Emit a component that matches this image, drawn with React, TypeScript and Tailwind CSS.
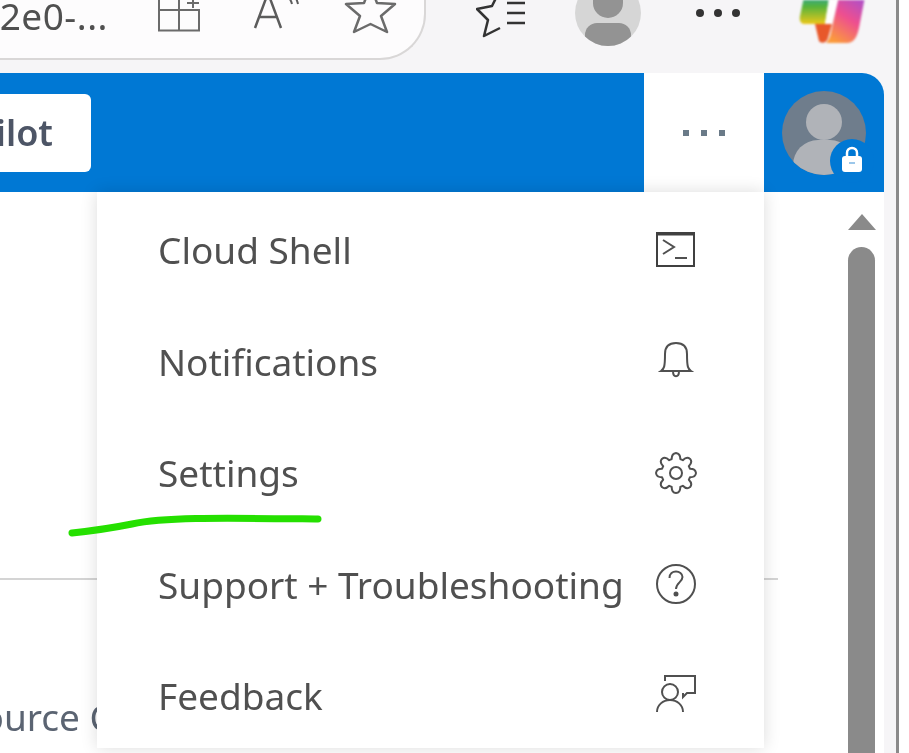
function ToolbarIcons() {
  return (
    <>
      <svg width="46" height="36" viewBox="0 0 46 36" fill="none" stroke="#6b6b6b" strokeWidth="2" className="ml-[37px] mb-[24px]">
        <path d="M2 -2V32.5H42V12H2M22 -2V32.5M30 5H42M36 -2V10" />
      </svg>
      <svg width="50" height="36" viewBox="0 0 50 36" fill="none" stroke="#5c5c5c" strokeWidth="2.500" className="ml-[50px] mb-[26px]">
        <path d="M2 32L15 -3L28 32M6 21H24" />
        <path d="M32 -2C36 1 38 4 39 8M38 -4C42 -1 44 4 45 8" strokeWidth="2" />
      </svg>
      <svg width="56" height="42" viewBox="0 0 56 42" fill="none" stroke="#6b6b6b" strokeWidth="2.500" strokeLinejoin="round" className="ml-[39px] mb-[20px]">
        <path d="M28.500 -10L35 7L53 8L39 20L45 36L28.500 28L12 36L18 20L4 8L22 7Z" />
      </svg>
    </>
  );
}

function CopilotLogo() {
  return (
    <svg width="68" height="44" viewBox="0 0 68 44" className="block">
      <defs>
        <linearGradient id="cl" x1="0" y1="0" x2="0" y2="1">
          <stop offset="0" stopColor="#1f9fc4" />
          <stop offset="0.45" stopColor="#55b33c" />
          <stop offset="1" stopColor="#ecc81a" />
        </linearGradient>
        <linearGradient id="cr" x1="0.8" y1="0" x2="0.3" y2="1">
          <stop offset="0" stopColor="#a64fd0" />
          <stop offset="0.5" stopColor="#ee4f8f" />
          <stop offset="1" stopColor="#fb9a3c" />
        </linearGradient>
      </defs>
      <path d="M6 -8H31L26 24H6C2 24 0 21 1 16Z" fill="url(#cl)" />
      <path d="M16 24H33L29 38C28 43 22 44 20 41Z" fill="#e8582a" />
      <path d="M41 -8H62C65 -8 66 -3 65 2L60 28C58 38 54 43 48 43H27C29 41 31 38 32 32Z" fill="url(#cr)" />
      <path d="M31 -8H41L32 24H26Z" fill="#ffffff" />
    </svg>
  );
}

function LockAvatar() {
  return (
    <div className="relative w-[84px] h-[84px]">
      <div className="relative w-[84px] h-[84px] rounded-full bg-[#6f7d8c] overflow-hidden">
        <div className="absolute left-[24px] top-[13px] w-[36px] h-[36px] rounded-full bg-[#b0b3b8]" />
        <div className="absolute left-[11px] top-[49px] w-[62px] h-[50px] rounded-full bg-[#b0b3b8]" />
      </div>
      <div className="absolute left-[48px] top-[48px] w-[44px] h-[44px] rounded-full bg-[#0078d4]" />
      <svg width="22" height="28" viewBox="0 0 22 28" className="absolute left-[59px] top-[55px]">
        <path d="M6 11V7C6 4 8 2 11 2S16 4 16 7V11" fill="none" stroke="#ffffff" strokeWidth="2.500" />
        <rect x="1" y="10" width="20" height="16" rx="3" fill="#ffffff" />
        <rect x="8" y="16" width="6" height="2" fill="#9cc7ea" />
      </svg>
    </div>
  );
}

const menuIconProps = {
  width: 42,
  height: 42,
  viewBox: "0 0 42 42",
  fill: "none",
  stroke: "#505050",
  strokeWidth: 2,
};

function ShellIcon() {
  return (
    <svg {...menuIconProps}>
      <rect x="2" y="4" width="37" height="33" stroke="#404040" />
      <path d="M2 5.500H39" stroke="#404040" />
      <path d="M8 11L19 18L8 25M20 29H32" />
    </svg>
  );
}

function BellIcon() {
  return (
    <svg {...menuIconProps}>
      <path d="M6 31C9 29 10 27 10 14C10 6 15 3 21 3S32 6 32 14C32 27 33 29 36 31Z" />
      <path d="M18 31C18 38 24 38 24 31" />
    </svg>
  );
}

// 8 scalloped teeth, same proportions as the portal settings glyph
function gearPath() {
  const pts: string[] = [];
  for (let i = 0; i < 8; i++) {
    const a = (i * Math.PI) / 4 - Math.PI / 2;
    const at = (r: number, da: number) =>
      `${(21 + r * Math.cos(a + da)).toFixed(1)} ${(21 + r * Math.sin(a + da)).toFixed(1)}`;
    pts.push(`${i === 0 ? "M" : "L"}${at(14.5, -0.3)}`);
    pts.push(`Q${at(20, -0.22)} ${at(20, 0)}`);
    pts.push(`Q${at(20, 0.22)} ${at(14.5, 0.3)}`);
  }
  return pts.join(" ") + "Z";
}

function GearIcon() {
  return (
    <svg {...menuIconProps}>
      <path d={gearPath()} strokeLinejoin="round" />
      <circle cx="21" cy="21" r="6" />
    </svg>
  );
}

function HelpIcon() {
  return (
    <svg {...menuIconProps}>
      <circle cx="21" cy="21" r="19" />
      <path d="M14.500 15C14.500 6 27.500 7 27.500 14C27.500 19 21 20 21 26" />
      <circle cx="21" cy="31" r="1.500" fill="#505050" />
    </svg>
  );
}

function FeedbackIcon() {
  return (
    <svg {...menuIconProps}>
      <path d="M10 6V1H40V18H32L28 22V18" />
      <circle cx="15" cy="17" r="8" />
      <path d="M2 37C2 30 8 25 15 25S28 30 28 37" />
    </svg>
  );
}

const menuItems = [
  { label: "Cloud Shell", icon: <ShellIcon /> },
  { label: "Notifications", icon: <BellIcon /> },
  { label: "Settings", icon: <GearIcon /> },
  { label: "Support + Troubleshooting", icon: <HelpIcon /> },
  { label: "Feedback", icon: <FeedbackIcon /> },
];

export default function App() {
  return (
    <div className="relative flex w-[909px] h-[753px] overflow-hidden bg-white font-['Noto_Sans',sans-serif] blur-[0.7px]">
      <div className="flex flex-col w-[896px] bg-[#f6f5f7]">
        {/* browser toolbar */}
        <div className="flex items-start h-[73px] overflow-hidden shrink-0">
          <div className="flex items-end w-[426px] h-[60px] bg-[#fdfcfd] border-b-2 border-r-2 border-[#d9d7d7] rounded-br-[46px] overflow-hidden shrink-0">
            <div className="flex justify-end w-[120px] shrink-0 overflow-hidden mb-[12px]">
              <span className="mr-[12px] text-[37px] leading-[60px] tracking-[0.5px] text-[#505050] whitespace-nowrap">2e0-...</span>
            </div>
            <ToolbarIcons />
          </div>
          <svg width="52" height="40" viewBox="0 0 52 40" fill="none" stroke="#333" strokeWidth="2.500" className="ml-[50px] shrink-0">
            <path d="M24 -10L16 6L1 9L12 20L8 36L24 28" strokeLinejoin="round" />
            <path d="M31 3H49M31 13H49M31 23H49" />
          </svg>
          <div className="relative ml-[47px] w-[66px] h-[46px] overflow-hidden shrink-0">
            <div className="absolute top-[-20px] w-[66px] h-[66px] rounded-full bg-[#d6d6d6] overflow-hidden">
              <div className="absolute left-[18px] top-[2px] w-[30px] h-[36px] rounded-full bg-[#939393]" />
              <div className="absolute left-[10px] top-[43px] w-[46px] h-[24px] rounded-full bg-[#939393]" />
            </div>
          </div>
          <div className="flex gap-[10px] ml-[55px] mt-[9px] shrink-0">
            <span className="w-[8px] h-[8px] rounded-full bg-[#333]" />
            <span className="w-[8px] h-[8px] rounded-full bg-[#333]" />
            <span className="w-[8px] h-[8px] rounded-full bg-[#333]" />
          </div>
          <div className="ml-[59px] shrink-0 blur-[1px]">
            <CopilotLogo />
          </div>
        </div>

        {/* portal header */}
        <div className="flex w-[884px] h-[119px] shrink-0 items-center bg-[#0078d4] rounded-tr-[22px] overflow-hidden">
          <div className="flex justify-end items-center w-[91px] h-[78px] bg-white rounded-r-[6px] overflow-hidden shrink-0">
            <span className="pr-[38px] text-[36px] font-semibold text-[#4d5566]">ilot</span>
          </div>
          <div className="flex-1" />
          <div className="flex items-center justify-center gap-[12px] w-[120px] h-full bg-white shrink-0">
            <span className="w-[6px] h-[6px] bg-[#6a7a88]" />
            <span className="w-[6px] h-[6px] bg-[#6a7a88]" />
            <span className="w-[6px] h-[6px] bg-[#6a7a88]" />
          </div>
          <div className="flex items-center justify-center w-[120px] h-full shrink-0">
            <LockAvatar />
          </div>
        </div>

        {/* page body */}
        <div className="flex flex-1 min-h-0">
          <div className="flex flex-1 bg-white">
            <div className="flex-1 pt-[386px]">
              <div className="w-[778px] h-[2px] bg-[#d4d4d4]" />
              <div className="flex justify-end w-[97px] mt-[112px] overflow-hidden">
                <span className="mr-[-16px] text-[37px] leading-[50px] text-[#5b6472] whitespace-nowrap">ource C</span>
              </div>
            </div>
            <div className="flex flex-col items-center w-[27px] mr-[9px] shrink-0 pt-[22px]">
              <div className="w-0 h-0 border-x-[14px] border-x-transparent border-b-[16px] border-b-[#8a8a8a]" />
              <div className="w-[27px] flex-1 mt-[17px] bg-[#8a8a8a] rounded-t-[14px]" />
            </div>
          </div>
          <div className="w-[12px] shrink-0" />
        </div>
      </div>
      <div className="w-[3px] bg-[#8a8a8a] shrink-0" />

      {/* dropdown menu */}
      <div className="absolute left-[97px] top-[192px] w-[667px] h-[556px] pt-[2px] pl-[61px] pr-[67px] bg-white shadow-[0_0_16px_rgba(0,0,0,0.14)]">
        {menuItems.map((item) => (
          <div key={item.label} className="flex items-center justify-between h-[111.500px]">
            <span className="text-[37px] text-[#505050] whitespace-nowrap">{item.label}</span>
            {item.icon}
          </div>
        ))}
      </div>

      {/* hand-drawn marker line */}
      <svg width="909" height="753" viewBox="0 0 909 753" fill="none" className="absolute inset-0 pointer-events-none">
        <path d="M72 533C100 530 112 528 132 524C165 517 220 518 318 519" stroke="#25e000" strokeWidth="7" strokeLinecap="round" />
      </svg>
    </div>
  );
}
